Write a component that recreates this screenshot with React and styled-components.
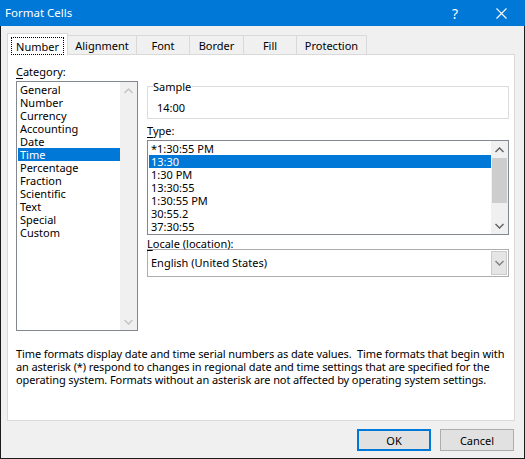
import React from 'react';
import styled, { createGlobalStyle } from 'styled-components';

const GlobalStyle = createGlobalStyle`
    html, body {
        margin: 0;
        padding: 0;
        background: #ffffff;
    }
    body {
        font-family: "Noto Sans", "Open Sans", sans-serif;
        font-size: 11px;
        color: #000000;
    }
    * {
        box-sizing: border-box;
    }
`;

const tabs = [
    { name: 'Number', width: 61 },
    { name: 'Alignment', width: 70 },
    { name: 'Font', width: 54 },
    { name: 'Border', width: 55 },
    { name: 'Fill', width: 54 },
    { name: 'Protection', width: 71 },
];

const categories = ['General', 'Number', 'Currency', 'Accounting', 'Date', 'Time', 'Percentage', 'Fraction', 'Scientific', 'Text', 'Special', 'Custom'];

const types = ['*1:30:55 PM', '13:30', '1:30 PM', '13:30:55', '1:30:55 PM', '30:55.2', '37:30:55'];

const Chevron = ({ up, color }) => (
    <svg width="9" height="6" viewBox="0 0 9 6">
        <path
            d={up ? 'M0.5 5 L4.5 1 L8.5 5' : 'M0.5 1 L4.5 5 L8.5 1'}
            fill="none"
            stroke={color}
            strokeWidth="1.4"
        />
    </svg>
);

const App = () => {
    return (
        <>
            <GlobalStyle />
            <Window>
                <TitleBar>
                    <TitleText>Format Cells</TitleText>
                    <CaptionButton $width={46}>?</CaptionButton>
                    <CaptionButton $width={47}>
                        <svg width="11" height="11" viewBox="0 0 11 11">
                            <path d="M0.5 0.5 L10.5 10.5 M10.5 0.5 L0.5 10.5" stroke="#ffffff" strokeWidth="1.1" />
                        </svg>
                    </CaptionButton>
                </TitleBar>
                <Body>
                    <TabStrip>
                        {tabs.map((tab, i) => (
                            <Tab key={tab.name} $width={tab.width} $selected={i === 0}>
                                <TabLabel $focused={i === 0}>{tab.name}</TabLabel>
                            </Tab>
                        ))}
                    </TabStrip>
                    <Panel>
                        <Columns>
                            <LeftColumn>
                                <FieldLabel><u>C</u>ategory:</FieldLabel>
                                <ListBox $height={250}>
                                    <ListItems>
                                        {categories.map(c => (
                                            <ListItem key={c} $selected={c === 'Time'}>{c}</ListItem>
                                        ))}
                                    </ListItems>
                                    <ScrollBar>
                                        <ScrollArrow><Chevron up color="#c4c4c4" /></ScrollArrow>
                                        <ScrollTrack />
                                        <ScrollArrow><Chevron color="#c4c4c4" /></ScrollArrow>
                                    </ScrollBar>
                                </ListBox>
                            </LeftColumn>
                            <RightColumn>
                                <Group>
                                    <GroupLegend>Sample</GroupLegend>
                                    <SampleValue>14:00</SampleValue>
                                </Group>
                                <FieldLabel $top={4}><u>T</u>ype:</FieldLabel>
                                <ListBox $height={95}>
                                    <ListItems>
                                        {types.map(t => (
                                            <ListItem key={t} $selected={t === '13:30'}>{t}</ListItem>
                                        ))}
                                    </ListItems>
                                    <ScrollBar>
                                        <ScrollArrow><Chevron up color="#606060" /></ScrollArrow>
                                        <ScrollThumb />
                                        <ScrollTrack />
                                        <ScrollArrow><Chevron color="#606060" /></ScrollArrow>
                                    </ScrollBar>
                                </ListBox>
                                <LocaleLabel><u>L</u>ocale (location):</LocaleLabel>
                                <Select>
                                    <SelectValue>English (United States)</SelectValue>
                                    <SelectButton><Chevron color="#808080" /></SelectButton>
                                </Select>
                            </RightColumn>
                        </Columns>
                        <Description>
                            <span>Time formats display date and time serial numbers as date values.&nbsp; Time formats that begin with</span>
                            <span>an asterisk (*) respond to changes in regional date and time settings that are specified for the</span>
                            <span>operating system. Formats without an asterisk are not affected by operating system settings.</span>
                        </Description>
                    </Panel>
                    <ButtonRow>
                        <DialogButton $default>OK</DialogButton>
                        <DialogButton>Cancel</DialogButton>
                    </ButtonRow>
                </Body>
            </Window>
        </>
    );
};

export default App;

const Window = styled.div`
    width: 525px;
    height: 459px;
    display: flex;
    flex-direction: column;
`;

const TitleBar = styled.div`
    height: 26px;
    flex: none;
    display: flex;
    align-items: center;
    background: #0078d7;
    color: #ffffff;
    padding-left: 5px;
`;

const TitleText = styled.div`
    flex: 1;
    font-size: 11.5px;
    line-height: 26px;
`;

const CaptionButton = styled.div`
    width: ${p => p.$width}px;
    height: 26px;
    display: flex;
    align-items: center;
    justify-content: center;
    font-size: 14px;
`;

const Body = styled.div`
    flex: 1;
    display: flex;
    flex-direction: column;
    background: #f0f0f0;
    border: 1px solid #1c1c1c;
    border-top: none;
    padding: 7px 9px 0 6px;
`;

const TabStrip = styled.div`
    height: 21px;
    flex: none;
    display: flex;
    align-items: flex-end;
    position: relative;
    z-index: 1;
`;

const Tab = styled.div`
    width: ${p => p.$width}px;
    height: ${p => p.$selected ? 22 : 19}px;
    margin-bottom: ${p => p.$selected ? -1 : 0}px;
    margin-left: -1px;
    display: flex;
    padding: ${p => p.$selected ? '3px 3px 0 3px' : '0'};
    background: ${p => p.$selected ? '#ffffff' : '#f0f0f0'};
    border: 1px solid #d9d9d9;
    border-bottom: none;

    &:first-child {
        margin-left: 0;
    }
`;

const TabLabel = styled.div`
    flex: 1;
    display: flex;
    align-items: center;
    justify-content: center;
    padding-top: 1px;
    border: 1px dotted ${p => p.$focused ? '#000000' : 'transparent'};
`;

const Panel = styled.div`
    flex: 1;
    display: flex;
    flex-direction: column;
    background: #ffffff;
    border: 1px solid #d9d9d9;
    padding: 9px 5px 0 8px;
`;

const Columns = styled.div`
    display: flex;
    gap: 9px;
`;

const LeftColumn = styled.div`
    width: 122px;
    display: flex;
    flex-direction: column;
`;

const RightColumn = styled.div`
    width: 362px;
    display: flex;
    flex-direction: column;
    padding-top: 16px;
`;

const FieldLabel = styled.div`
    line-height: 16px;
    margin-top: ${p => p.$top || 0}px;
    margin-bottom: 1px;

    u {
        text-decoration-thickness: 1px;
        text-underline-offset: 2px;
    }
`;

const LocaleLabel = styled(FieldLabel)`
    line-height: 12px;
    margin-top: 3px;
    margin-bottom: -1px;
    position: relative;
    z-index: 1;
`;

const ListBox = styled.div`
    height: ${p => p.$height}px;
    display: flex;
    background: #ffffff;
    border: 1px solid #828790;
`;

const ListItems = styled.div`
    flex: 1;
    padding: 1px 0 0 1px;
`;

const ListItem = styled.div`
    height: 13px;
    line-height: 13px;
    padding-left: 2px;
    white-space: nowrap;
    background: ${p => p.$selected ? '#0078d7' : 'transparent'};
    color: ${p => p.$selected ? '#ffffff' : '#000000'};
`;

const ScrollBar = styled.div`
    width: 17px;
    display: flex;
    flex-direction: column;
    background: #f0f0f0;
`;

const ScrollArrow = styled.div`
    height: 17px;
    flex: none;
    display: flex;
    align-items: center;
    justify-content: center;
`;

const ScrollThumb = styled.div`
    height: 45px;
    margin: 0 1px;
    background: #cdcdcd;
`;

const ScrollTrack = styled.div`
    flex: 1;
`;

const Group = styled.fieldset`
    margin: 0;
    min-width: 0;
    height: 39px;
    padding: 7px 9px 0 9px;
    border: 1px solid #dcdcdc;
`;

const GroupLegend = styled.legend`
    margin-left: -4px;
    padding: 0 1px 0 0;
    line-height: 13px;
`;

const SampleValue = styled.div`
    line-height: 15px;
`;

const Select = styled.div`
    height: 28px;
    display: flex;
    border: 1px solid #adadad;
    background: #ffffff;
`;

const SelectValue = styled.div`
    flex: 1;
    display: flex;
    align-items: center;
    padding: 0 0 1px 3px;
`;

const SelectButton = styled.div`
    width: 16px;
    margin: 1px;
    display: flex;
    align-items: center;
    justify-content: center;
    background: #e5e5e5;
    border: 1px solid #cccccc;
`;

const Description = styled.div`
    margin-top: 16px;
    display: flex;
    flex-direction: column;
    line-height: 13px;
    letter-spacing: -0.1px;

    span {
        white-space: nowrap;
    }
`;

const ButtonRow = styled.div`
    height: 37px;
    flex: none;
    display: flex;
    justify-content: flex-end;
    gap: 9px;
    padding: 8px 1px 0 0;
`;

const DialogButton = styled.div`
    width: 74px;
    height: 22px;
    display: flex;
    align-items: center;
    justify-content: center;
    background: #e1e1e1;
    border: ${p => p.$default ? '2px solid #0078d7' : '1px solid #adadad'};
`;
